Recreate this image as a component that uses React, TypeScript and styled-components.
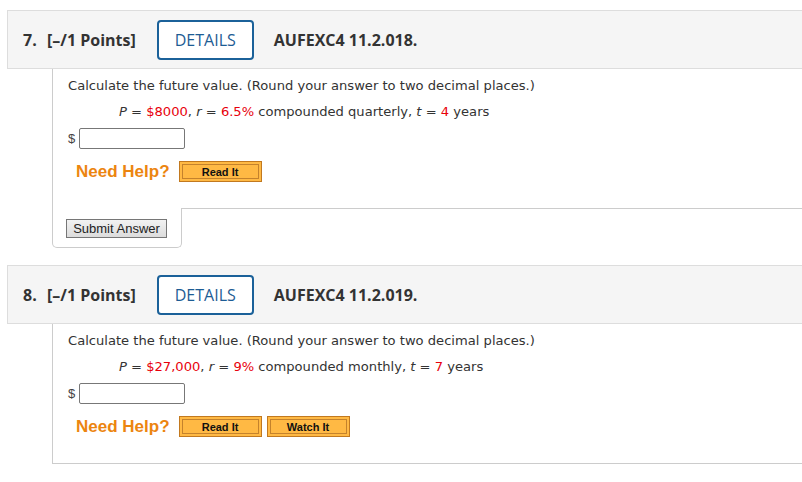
import React from "react";
import styled, { createGlobalStyle } from "styled-components";

const GlobalStyle = createGlobalStyle`
  html, body {
    margin: 0;
    padding: 0;
    background: #ffffff;
    overflow: hidden;
  }
`;

const PageEl = styled.div`
  padding: 10px 0 0 7px;
  width: 830px;
`;

const QuestionEl = styled.section`
  margin-bottom: 17px;
`;

const HeaderEl = styled.div`
  display: flex;
  align-items: center;
  height: 57px;
  background: #f5f5f5;
  border: 1px solid #dddddd;
  padding-left: 15px;
  font-family: "Open Sans", "Noto Sans", sans-serif;
  color: #333333;
`;

const NumberEl = styled.span`
  font-size: 16px;
  font-weight: 700;
  width: 24px;
`;

const PointsEl = styled.span`
  font-size: 16px;
  font-weight: 700;
  margin-right: 21px;
`;

const DetailsButton = styled.button`
  box-sizing: border-box;
  width: 97px;
  height: 40px;
  border: 2px solid #1b6199;
  border-radius: 4px;
  background: #ffffff;
  color: #1d5c94;
  font-family: "Open Sans", "Noto Sans", sans-serif;
  font-size: 16px;
  padding: 0;
  margin-right: 20px;
`;

const CodeEl = styled.span`
  font-size: 16px;
  font-weight: 700;
`;

const BodyEl = styled.div<{ $closed?: boolean }>`
  display: flex;
  flex-direction: column;
  align-items: flex-start;
  margin-left: 45px;
  border-left: 1px solid #cccccc;
  border-bottom: ${(p) => (p.$closed ? "1px solid #cccccc" : "none")};
  padding: 9px 15px 0 15px;
  height: 130px;
  font-family: "DejaVu Sans", Verdana, sans-serif;
  font-size: 13.1px;
  color: #333333;
`;

const TextLine = styled.div<{ $indent?: number }>`
  line-height: 16px;
  margin-left: ${(p) => p.$indent ?? 0}px;
  margin-bottom: 10px;
  white-space: nowrap;
`;

const Var = styled.i``;

const Value = styled.span`
  color: #e8000b;
`;

const AnswerRow = styled.div`
  display: flex;
  align-items: center;
  gap: 4px;
  margin-top: -2px;
`;

const Dollar = styled.span`
  font-family: "Liberation Sans", Arial, sans-serif;
  font-size: 13px;
  color: #444444;
`;

const AnswerInput = styled.input`
  box-sizing: border-box;
  width: 106px;
  height: 21px;
  border: 1px solid #777777;
  border-radius: 2px;
  padding: 0 3px;
`;

const HelpRow = styled.div`
  display: flex;
  align-items: center;
  margin: 12px 0 0 8px;
`;

const HelpLabel = styled.span`
  font-family: "Liberation Sans", Arial, sans-serif;
  font-weight: 700;
  font-size: 17px;
  color: #ec8510;
  margin-right: 9px;
`;

const HelpButton = styled.button`
  box-sizing: border-box;
  width: 83px;
  height: 21px;
  margin-right: 5px;
  padding: 2px;
  border: 1px solid #c2791f;
  background: #ffb944;
  display: flex;
`;

const HelpInner = styled.span`
  flex: 1;
  display: flex;
  align-items: center;
  justify-content: center;
  border: 1px solid #c4822c;
  font-family: "Liberation Sans", Arial, sans-serif;
  font-weight: 700;
  font-size: 11px;
  color: #111111;
`;

const SubmitRow = styled.div`
  display: flex;
  margin-left: 45px;
`;

const SubmitTab = styled.div`
  box-sizing: border-box;
  width: 130px;
  height: 40px;
  border: 1px solid #cccccc;
  border-top: none;
  border-radius: 0 0 5px 5px;
  padding: 11px 0 0 13px;
`;

const TabFiller = styled.div`
  flex: 1;
  border-top: 1px solid #cccccc;
`;

const SubmitButton = styled.button`
  box-sizing: border-box;
  width: 101px;
  height: 19px;
  padding: 0;
  border: 1px solid #767676;
  background: linear-gradient(#f2f2f2, #dcdcdc);
  font-family: "Liberation Sans", Arial, sans-serif;
  font-size: 13px;
  color: #222222;
`;

type Question = {
  number: number;
  code: string;
  p: string;
  r: string;
  period: string;
  t: string;
  watch: boolean;
  submit: boolean;
};

const QUESTIONS: Question[] = [
  { number: 7, code: "AUFEXC4 11.2.018.", p: "$8000", r: "6.5%", period: "quarterly", t: "4", watch: false, submit: true },
  { number: 8, code: "AUFEXC4 11.2.019.", p: "$27,000", r: "9%", period: "monthly", t: "7", watch: true, submit: false },
];

const QuestionBlock = ({ q }: { q: Question }) => (
  <QuestionEl>
    <HeaderEl>
      <NumberEl>{q.number}.</NumberEl>
      <PointsEl>[–/1 Points]</PointsEl>
      <DetailsButton>DETAILS</DetailsButton>
      <CodeEl>{q.code}</CodeEl>
    </HeaderEl>
    <BodyEl $closed={!q.submit}>
      <TextLine>
        Calculate the future value. (Round your answer to two decimal places.)
      </TextLine>
      <TextLine $indent={51}>
        <Var>P</Var> = <Value>{q.p}</Value>, <Var>r</Var> = <Value>{q.r}</Value>{" "}
        compounded {q.period}, <Var>t</Var> = <Value>{q.t}</Value> years
      </TextLine>
      <AnswerRow>
        <Dollar>$</Dollar>
        <AnswerInput type="text" />
      </AnswerRow>
      <HelpRow>
        <HelpLabel>Need Help?</HelpLabel>
        <HelpButton>
          <HelpInner>Read It</HelpInner>
        </HelpButton>
        {q.watch && (
          <HelpButton>
            <HelpInner>Watch It</HelpInner>
          </HelpButton>
        )}
      </HelpRow>
    </BodyEl>
    {q.submit && (
      <SubmitRow>
        <SubmitTab>
          <SubmitButton>Submit Answer</SubmitButton>
        </SubmitTab>
        <TabFiller />
      </SubmitRow>
    )}
  </QuestionEl>
);

export default function App() {
  return (
    <>
      <GlobalStyle />
      <PageEl>
        {QUESTIONS.map((q) => (
          <QuestionBlock key={q.number} q={q} />
        ))}
      </PageEl>
    </>
  );
}
